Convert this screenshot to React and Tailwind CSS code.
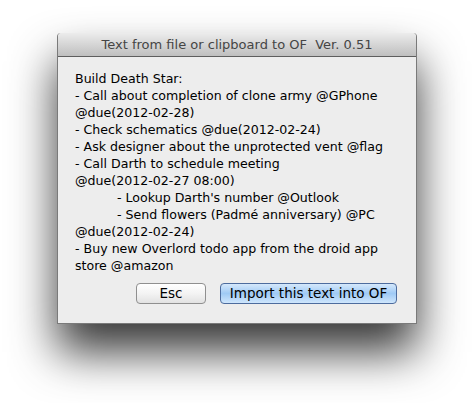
export default function App() {
  const font = { fontFamily: '"Lucida Grande", "DejaVu Sans", "Noto Sans", sans-serif' };
  const lines = [
    { t: "Build Death Star:" },
    { t: "- Call about completion of clone army @GPhone" },
    { t: "@due(2012-02-28)" },
    { t: "- Check schematics @due(2012-02-24)" },
    { t: "- Ask designer about the unprotected vent @flag" },
    { t: "- Call Darth to schedule meeting" },
    { t: "@due(2012-02-27 08:00)" },
    { t: "- Lookup Darth's number @Outlook", i: true },
    { t: "- Send flowers (Padmé anniversary) @PC", i: true },
    { t: "@due(2012-02-24)" },
    { t: "- Buy new Overlord todo app from the droid app" },
    { t: "store @amazon" },
  ];
  return (
    <div className="w-[474px] h-[403px] bg-white pt-[33px] pl-[57px]" style={font}>
      <div className="w-[360px] h-[291px] flex flex-col border border-[#7a7a7a] border-t-0 bg-[#ededed] shadow-[0_28px_46px_rgba(0,0,0,0.78)] rounded-t-[4px]">
        <div className="h-[24px] shrink-0 rounded-t-[4px] bg-gradient-to-b from-[#ececec] to-[#bfbfbf] border-b border-[#5e5e5e] flex items-center justify-center text-[13px] text-[#454545] whitespace-pre">
          Text from file or clipboard to OF  Ver. 0.51
        </div>
        <div className="flex-1 flex flex-col pl-[17px] pr-[19px] pt-[13px] pb-[19px]">
          <div className="text-[12.6px] leading-[17px] text-black">
            {lines.map((l, k) => (
              <div key={k} className={l.i ? "pl-[42px]" : ""}>{l.t}</div>
            ))}
          </div>
          <div className="mt-auto flex justify-end gap-[14px]">
            <button className="w-[70px] h-[21px] rounded-[4px] border border-[#8f8f8f] bg-gradient-to-b from-white via-[#f3f3f3] to-[#e2e2e2] text-[13.5px] text-black leading-none">
              Esc
            </button>
            <button className="w-[177px] h-[21px] rounded-[4px] border border-[#4d6c9e] bg-gradient-to-b from-[#d5e8fb] via-[#9fcaf5] to-[#cfe6fc] text-[13.5px] text-black leading-none">
              Import this text into OF
            </button>
          </div>
        </div>
      </div>
    </div>
  );
}
